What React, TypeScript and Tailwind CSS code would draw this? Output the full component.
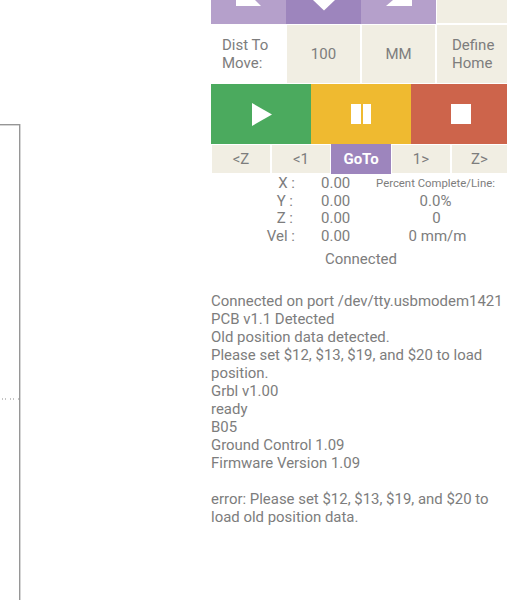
const consoleLines = [
  'Connected on port /dev/tty.usbmodem1421',
  'PCB v1.1 Detected',
  'Old position data detected.',
  'Please set $12, $13, $19, and $20 to load position.',
  'Grbl v1.00',
  'ready',
  'B05',
  'Ground Control 1.09',
  'Firmware Version 1.09',
  '',
  'error: Please set $12, $13, $19, and $20 to load old position data.',
]

const stats = [
  { label: 'X :', labelCls: 'w-[84px] text-right', value: '0.00', side: 'Percent Complete/Line:', sideCls: 'w-[148px] whitespace-nowrap pl-[5px] text-center text-[11.35px]' },
  { label: 'Y :', labelCls: 'w-[84px] pr-[2px] text-right', value: '0.00', side: '0.0%', sideCls: 'w-[148px] pl-[5px] text-center' },
  { label: 'Z :', labelCls: 'w-[84px] pr-[2px] text-right', value: '0.00', side: '0', sideCls: 'w-[148px] pl-[7px] text-center' },
  { label: 'Vel :', labelCls: 'w-[84px] text-right', value: '0.00', side: '0 mm/m', sideCls: 'w-[148px] pl-[9px] text-center' },
]

export default function App() {
  return (
    <div className="flex h-[600px] w-[507px] overflow-hidden bg-white font-['Roboto',sans-serif] text-[15px] text-[#7d7d7d]">
      <div className="w-[211px] shrink-0 pt-[124px]">
        <div className="flex h-[476px] w-[20px] flex-col border-t border-r border-[#969696] pt-[273px] shadow-[1px_0_0_#d5d5d5,inset_0_1px_0_#d5d5d5]">
          <svg width="19" height="2" viewBox="0 0 19 2">
            <path d="M2 0h1v2H2zM5 0h1v2H5zM10 0h1v2h-1zM13 0h1v2h-1zM18 0h1v2h-1z" fill="#c4c4c4" />
          </svg>
        </div>
      </div>

      <div className="w-[296px] shrink-0">
        <div className="flex h-[24px] items-start">
          <div className="relative h-full w-[75px] overflow-hidden bg-[#b5a0cb]">
            <svg className="absolute left-[25px] top-0" width="26" height="6" viewBox="0 0 26 6">
              <path d="M0 0H19L25 6H0Z" fill="#fff" />
            </svg>
          </div>
          <div className="relative h-full w-[75px] overflow-hidden bg-[#9d85bd]">
            <svg className="absolute left-[27px] top-0" width="22" height="11" viewBox="0 0 22 11">
              <path d="M0 0H22L11 10.5Z" fill="#fff" />
            </svg>
          </div>
          <div className="relative h-full w-[75px] overflow-hidden bg-[#b5a0cb]">
            <svg className="absolute left-[25px] top-0" width="26" height="6" viewBox="0 0 26 6">
              <path d="M7 0H26V6H0Z" fill="#fff" />
            </svg>
          </div>
          <div className="ml-px h-[23px] flex-1 bg-[#f1eee3]" />
        </div>

        <div className="mt-px flex h-[58px]">
          <div className="flex w-[76px] items-center pl-[11px] leading-[18px]">
            <span>Dist To<br />Move:</span>
          </div>
          <div className="flex w-[73px] items-center justify-center bg-[#f1eee3]">100</div>
          <div className="ml-[2px] flex w-[73px] items-center justify-center bg-[#f1eee3]">MM</div>
          <div className="ml-[2px] flex flex-1 items-center pl-[15px] bg-[#f1eee3] leading-[18px]">
            <span>Define<br />Home</span>
          </div>
        </div>

        <div className="mt-px flex h-[60px] w-[300px]">
          <div className="flex w-[100px] items-center justify-center bg-[#4baa5e] pl-[2px]">
            <svg width="20" height="23" viewBox="0 0 20 23"><path d="M0 0L20 11.5L0 23Z" fill="#fff" /></svg>
          </div>
          <div className="flex w-[100px] items-center justify-center gap-[2px] bg-[#efba30]">
            <div className="h-[20px] w-[10px] bg-white" />
            <div className="h-[20px] w-[8px] bg-white" />
          </div>
          <div className="flex w-[100px] items-center justify-center bg-[#cd644b]">
            <div className="h-[20px] w-[20px] bg-white" />
          </div>
        </div>

        <div className="flex h-[30px] items-center pl-px">
          <div className="flex h-[28px] w-[58px] items-center justify-center bg-[#f1eee3]">&lt;Z</div>
          <div className="ml-[2px] flex h-[28px] w-[58px] items-center justify-center bg-[#f1eee3]">&lt;1</div>
          <div className="ml-px flex h-[30px] w-[60px] items-center justify-center bg-[#9d85bd] font-bold text-white">GoTo</div>
          <div className="ml-px flex h-[28px] w-[58px] items-center justify-center bg-[#f1eee3]">1&gt;</div>
          <div className="ml-[2px] flex h-[28px] flex-1 items-center justify-center bg-[#f1eee3]">Z&gt;</div>
        </div>

        <div className="leading-[18px]">
          {stats.map(s => (
            <div key={s.label} className="flex h-[17.7px] items-center">
              <div className={s.labelCls}>{s.label}</div>
              <div className="w-[64px] pl-[26px]">{s.value}</div>
              <div className={s.sideCls}>{s.side}</div>
            </div>
          ))}
        </div>

        <div className="mt-[5px] pl-[4px] text-center leading-[18px]">Connected</div>

        <div className="mt-[24px] pr-[2px] text-[14.95px] leading-[18px]">
          {consoleLines.map((l, i) => (
            <div key={i} className="min-h-[18px]">{l}</div>
          ))}
        </div>
      </div>
    </div>
  )
}
